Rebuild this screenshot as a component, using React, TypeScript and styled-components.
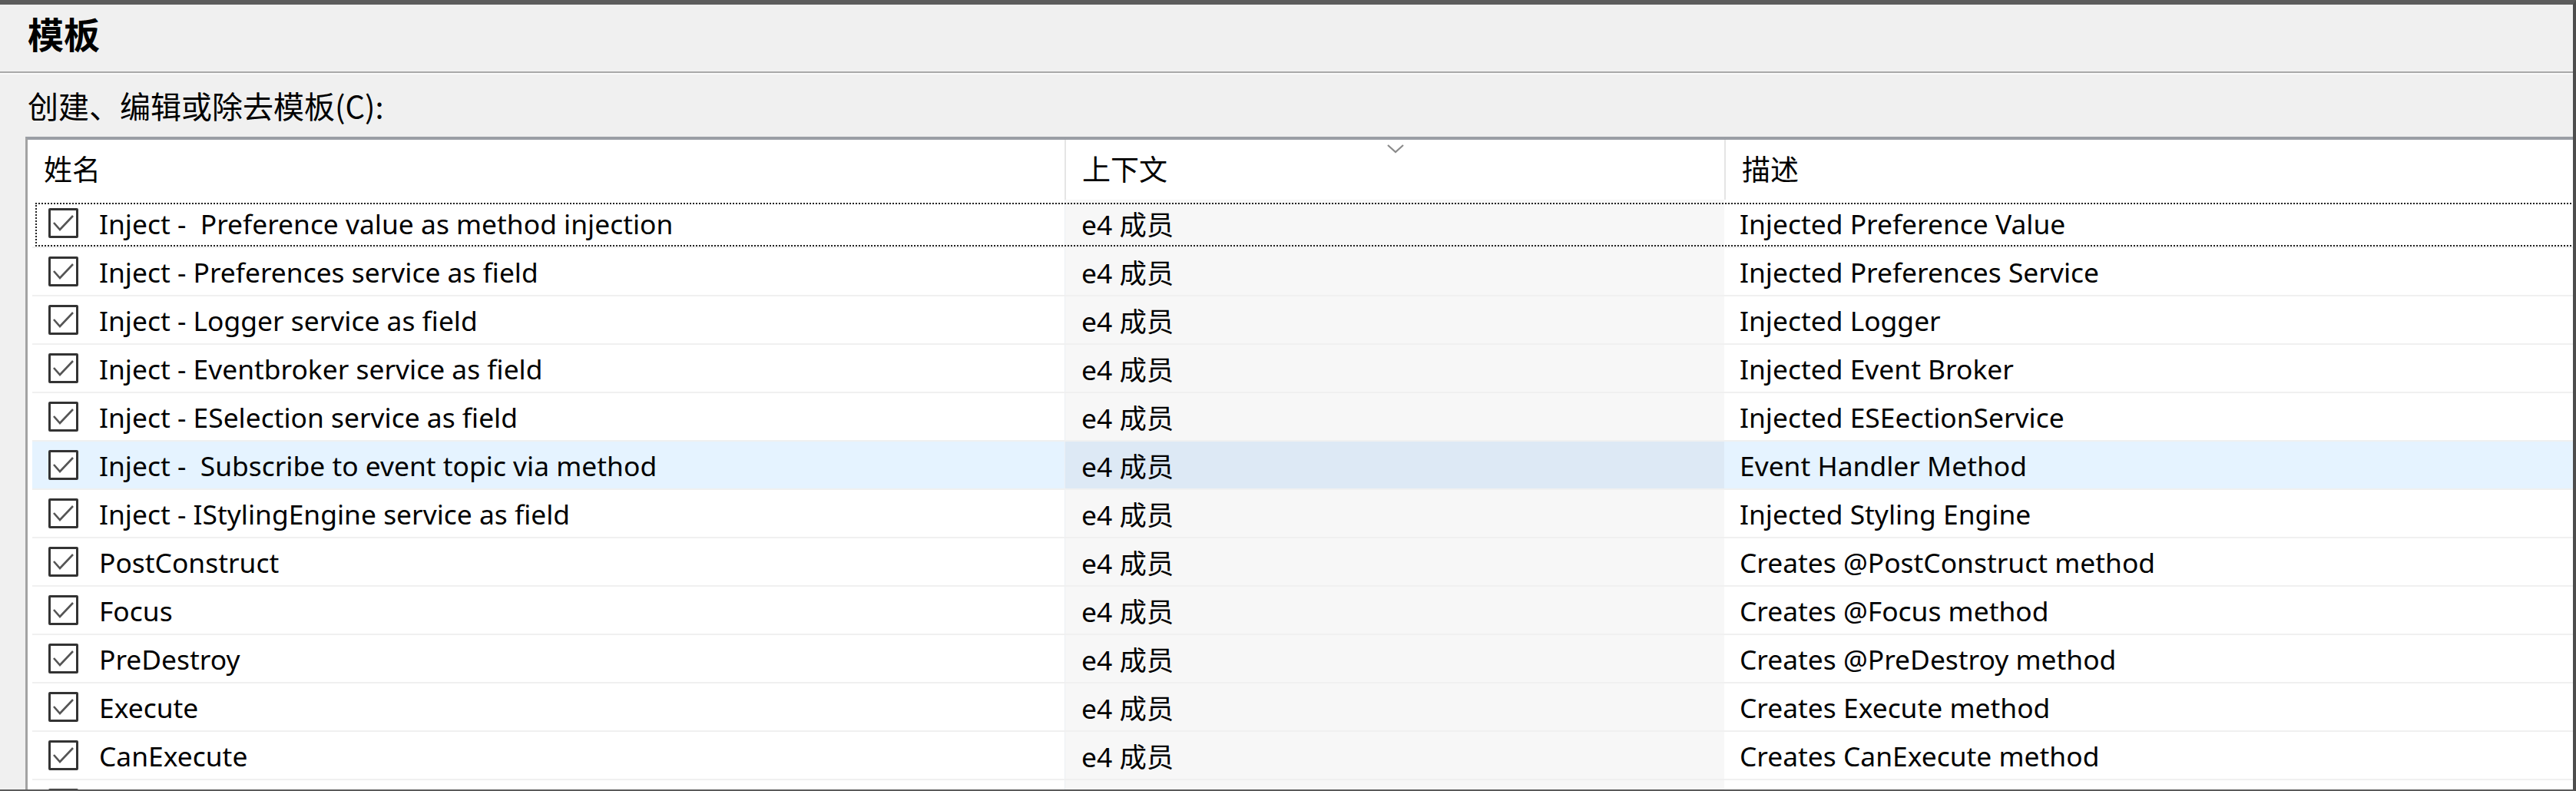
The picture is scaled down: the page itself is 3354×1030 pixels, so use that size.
import React from 'react'
import styled, { createGlobalStyle } from 'styled-components'

const GlobalStyle = createGlobalStyle`
  html, body {
    margin: 0;
    padding: 0;
    background: #f0f0f0;
    overflow: hidden;
  }
  * {
    box-sizing: border-box;
  }
`

const UI_FONT = `"Noto Sans", "Noto Sans CJK SC", sans-serif`
const CJK_FONT = `"Noto Sans CJK SC", "Noto Sans", sans-serif`

const Frame = styled.div`
  height: 1030px;
  width: 3354px;
  display: flex;
  flex-direction: column;
  background: #f0f0f0;
  border-top: 6px solid #5c5c5c;
  border-right: 4px solid #4d4d4d;
  border-bottom: 2px solid #5a5a5a;
  overflow: hidden;
  font-family: ${UI_FONT};
  color: #000;
`

const TitleBar = styled.h1`
  margin: 0;
  height: 87px;
  flex-shrink: 0;
  padding: 7px 0 0 36px;
  font-family: ${CJK_FONT};
  font-weight: 700;
  font-size: 47px;
  line-height: 60px;
`

const Rule = styled.div`
  height: 4px;
  flex-shrink: 0;
  border-top: 2px solid #a9a9a9;
  border-bottom: 2px solid #f9f9f9;
`

const Section = styled.div`
  flex: 1;
  min-height: 0;
  display: flex;
  flex-direction: column;
  padding-left: 33px;
`

const Label = styled.div`
  height: 81px;
  flex-shrink: 0;
  display: flex;
  align-items: center;
  padding: 0 0 2px 3px;
  font-family: ${CJK_FONT};
  font-size: 40px;
`

const ListView = styled.div`
  flex: 1;
  min-height: 0;
  background: #fff;
  border-top: 4px solid #9a9ea5;
  border-left: 3px solid #a3a3a3;
  overflow: hidden;
`

const HeaderRow = styled.div`
  display: grid;
  grid-template-columns: 1350px 859px 1fr;
  height: 78px;
`

const HeaderCell = styled.div<{ $divider?: boolean }>`
  position: relative;
  display: flex;
  align-items: center;
  padding: 0 21px 4px;
  font-family: ${CJK_FONT};
  font-size: 37px;
  border-left: ${(p) => (p.$divider ? '2px solid #e5e5e5' : 'none')};
`

const SortArrow = styled.svg`
  position: absolute;
  top: 5px;
  left: 50%;
  transform: translateX(-50%);
`

const Rows = styled.div`
  padding-left: 6px;
`

const Row = styled.div<{ $hover?: boolean; $focus?: boolean }>`
  position: relative;
  display: grid;
  grid-template-columns: 1344px 859px 1fr;
  height: 63px;
  border-bottom: 2px solid #f0f0f0;
  background: ${(p) => (p.$hover ? '#e5f3ff' : '#fff')};

  ${(p) =>
    p.$focus &&
    `
    &::after {
      content: '';
      position: absolute;
      top: 4px;
      bottom: 0;
      left: 4px;
      right: -6px;
      border: 2px dotted #222;
      pointer-events: none;
    }
  `}
`

const NameCell = styled.div`
  display: flex;
  align-items: center;
  gap: 27px;
  padding-left: 21px;
  font-size: 35.4px;
  white-space: pre;
  overflow: hidden;
`

const ContextCell = styled.div<{ $hover?: boolean }>`
  display: flex;
  align-items: center;
  padding-left: 21px;
  font-size: 35.4px;
  white-space: pre;
  background: ${(p) => (p.$hover ? '#dde9f5' : '#f7f7f7')};
  border-left: 1px solid #eceff3;
`

const DescCell = styled.div`
  display: flex;
  align-items: center;
  padding-left: 20px;
  font-size: 35.4px;
  white-space: pre;
  overflow: hidden;
`

const Box = styled.span`
  width: 39px;
  height: 39px;
  flex-shrink: 0;
  border: 3px solid #333;
  border-radius: 2px;
  background: #fff;
  display: flex;
  align-items: center;
  justify-content: center;
`

const CheckBox = () => (
  <Box>
    <svg width="33" height="33" viewBox="0 0 33 33">
      <polyline points="4,16 12,25 29,7" fill="none" stroke="#555" strokeWidth="2.6" />
    </svg>
  </Box>
)

type Template = { name: string; context: string; desc: string }

const templates: Template[] = [
  { name: 'Inject -  Preference value as method injection', context: 'e4 成员', desc: 'Injected Preference Value' },
  { name: 'Inject - Preferences service as field', context: 'e4 成员', desc: 'Injected Preferences Service' },
  { name: 'Inject - Logger service as field', context: 'e4 成员', desc: 'Injected Logger' },
  { name: 'Inject - Eventbroker service as field', context: 'e4 成员', desc: 'Injected Event Broker' },
  { name: 'Inject - ESelection service as field', context: 'e4 成员', desc: 'Injected ESEectionService' },
  { name: 'Inject -  Subscribe to event topic via method', context: 'e4 成员', desc: 'Event Handler Method' },
  { name: 'Inject - IStylingEngine service as field', context: 'e4 成员', desc: 'Injected Styling Engine' },
  { name: 'PostConstruct', context: 'e4 成员', desc: 'Creates @PostConstruct method' },
  { name: 'Focus', context: 'e4 成员', desc: 'Creates @Focus method' },
  { name: 'PreDestroy', context: 'e4 成员', desc: 'Creates @PreDestroy method' },
  { name: 'Execute', context: 'e4 成员', desc: 'Creates Execute method' },
  { name: 'CanExecute', context: 'e4 成员', desc: 'Creates CanExecute method' },
]

const HOVER_ROW = 5

export default function App() {
  return (
    <>
      <GlobalStyle />
      <Frame>
        <TitleBar>模板</TitleBar>
        <Rule />
        <Section>
          <Label>创建、编辑或除去模板(C):</Label>
          <ListView>
            <HeaderRow>
              <HeaderCell>姓名</HeaderCell>
              <HeaderCell $divider>
                <SortArrow width="24" height="14" viewBox="0 0 24 14">
                  <polyline points="2,2 12,11 22,2" fill="none" stroke="#8a8a8a" strokeWidth="2.2" />
                </SortArrow>
                上下文
              </HeaderCell>
              <HeaderCell $divider>描述</HeaderCell>
            </HeaderRow>
            <Rows>
              {templates.map((t, i) => (
                <Row key={i} $hover={i === HOVER_ROW} $focus={i === 0}>
                  <NameCell>
                    <CheckBox />
                    {t.name}
                  </NameCell>
                  <ContextCell $hover={i === HOVER_ROW}>{t.context}</ContextCell>
                  <DescCell>{t.desc}</DescCell>
                </Row>
              ))}
              {/* the next row is only just scrolled into view */}
              <Row>
                <NameCell>
                  <CheckBox />
                </NameCell>
                <ContextCell />
                <DescCell />
              </Row>
            </Rows>
          </ListView>
        </Section>
      </Frame>
    </>
  )
}
